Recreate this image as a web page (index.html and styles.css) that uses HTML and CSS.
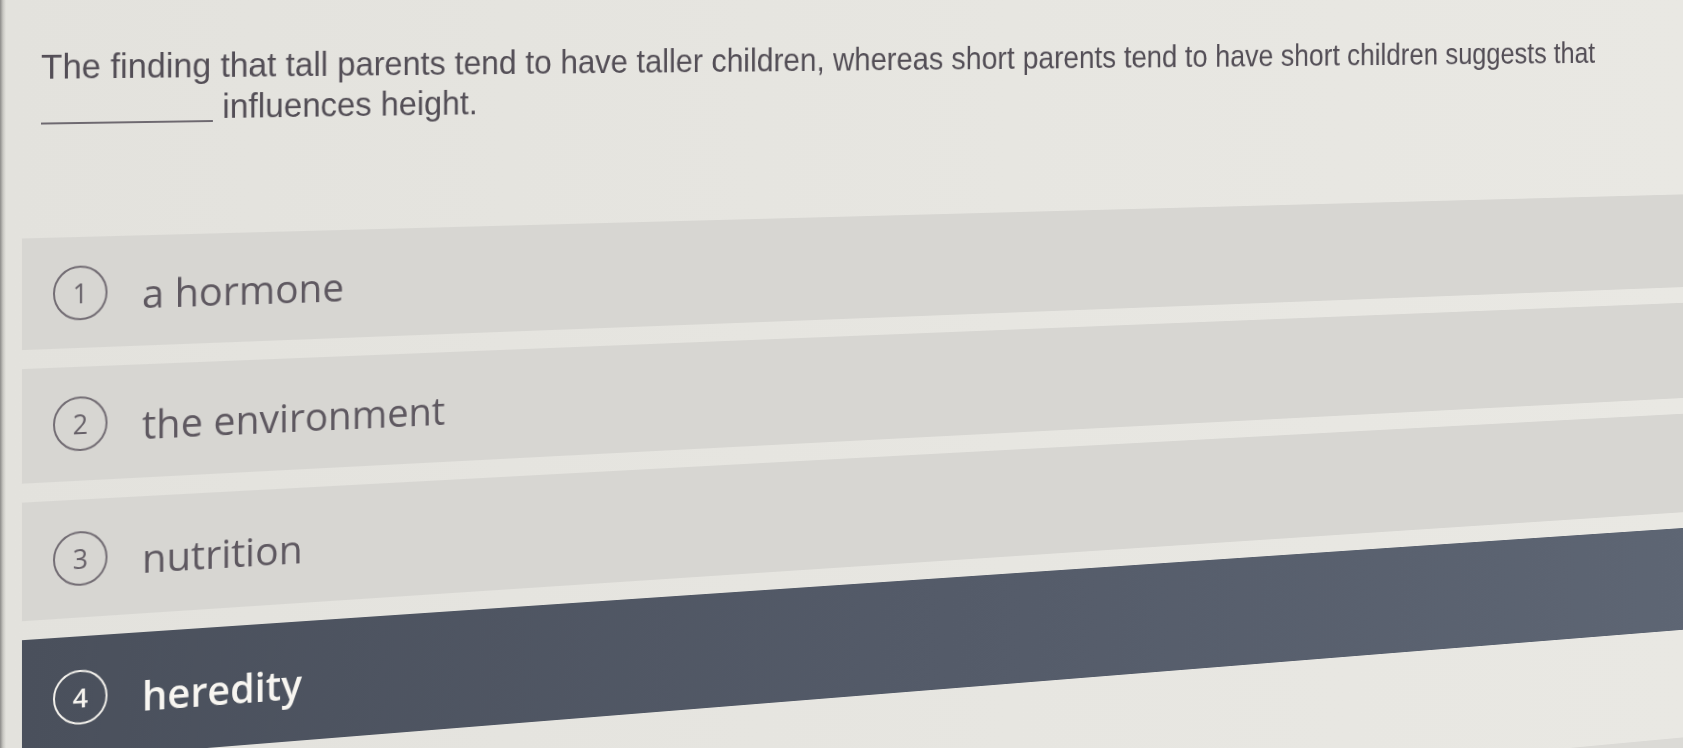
FILE: index.html
```html
<!DOCTYPE html>
<html lang="en">
<head>
  <meta charset="UTF-8" />
  <meta name="viewport" content="width=device-width, initial-scale=1.0" />
  <title>Question</title>
  <link rel="stylesheet" href="styles.css">
</head>
<body>
  <main class="sheet">
    <div class="question">
      <p>The finding that tall parents tend to have taller children, whereas short parents tend to have short children suggests that <span class="blank"></span> influences height.</p>
    </div>

    <ol class="choices">
      <li class="choice"><span class="num">1</span><span class="label">a hormone</span></li>
      <li class="choice"><span class="num">2</span><span class="label">the environment</span></li>
      <li class="choice"><span class="num">3</span><span class="label">nutrition</span></li>
      <li class="choice selected"><span class="num">4</span><span class="label">heredity</span></li>
    </ol>

    <div class="after"></div>
  </main>
</body>
</html>
```

FILE: styles.css
```css
html,
body {
  margin: 0;
  height: 100%;
  overflow: hidden;
}

body {
  background: linear-gradient(to right, #8b8a88 0, #c8c7c2 3px, #e3e2dd 6px, #e7e6e1 60%, #e9e8e3 100%);
  font-family: 'Liberation Sans', Arial, sans-serif;
}

/* the whole sheet sits tilted and foreshortened toward the right */
.sheet {
  width: 2060px;
  height: 960px;
  transform-origin: 0 0;
  transform: matrix3d(1.00409, -0.00221, 0, 0.00010229, 0, 0.995, 0, 0, 0, 0, 1, 0, -0.16366, 0.2884, 0, 0.99591);
}

.question {
  padding: 46px 0 0 41px;
  width: 1900px;
}

.question p {
  margin: 0;
  font-size: 35px;
  line-height: 42px;
  color: #534e56;
}

.blank {
  display: inline-block;
  width: 175px;
  height: 1px;
  border-bottom: 2px solid #6e6970;
  vertical-align: -4px;
}

.choices {
  list-style: none;
  margin: 109px 0 0;
  padding: 0 0 0 22px;
  display: flex;
  flex-direction: column;
  gap: 19px;
}

.choice {
  height: 112px;
  padding-left: 31px;
  display: flex;
  align-items: center;
  background: #d7d6d2;
}

/* rows lower down read a little taller */
.choice:nth-child(2) { height: 115px; }
.choice:nth-child(3) { height: 119px; }
.choice:nth-child(4) { height: 123px; }

.num {
  flex: none;
  width: 55px;
  height: 55px;
  box-sizing: border-box;
  border: 2px solid #736d74;
  border-radius: 50%;
  display: flex;
  align-items: center;
  justify-content: center;
  font-family: 'Open Sans', sans-serif;
  font-size: 27px;
  color: #666068;
}

.label {
  margin-left: 35px;
  padding-top: 5px;
  font-family: 'Open Sans', sans-serif;
  font-size: 41px;
  line-height: 1;
  color: #5e5860;
}

.selected {
  background: linear-gradient(to right, #4a505c, #545b69 50%, #5e6674);
}

.selected .num {
  border: 2.5px solid #f3f1ec;
  color: #f6f4ef;
  font-weight: 600;
}

.selected .label {
  color: #f8f6f1;
  font-weight: 600;
}

.after {
  margin: 130px 0 0 22px;
  height: 120px;
  background: #dbdad6;
}
```
